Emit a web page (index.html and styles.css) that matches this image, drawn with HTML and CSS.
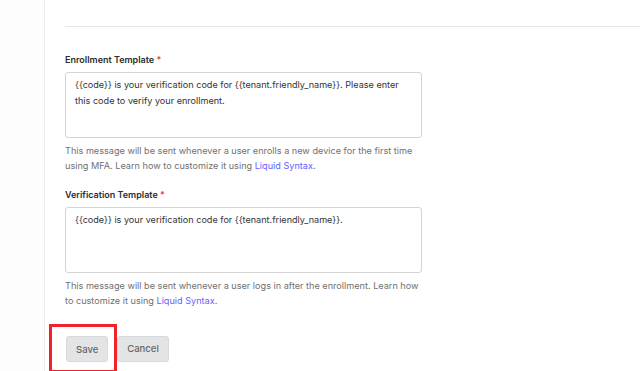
FILE: index.html
```html
<!DOCTYPE html>
<html lang="en">
<head>
    <meta charset="UTF-8">
    <meta name="viewport" content="width=device-width, initial-scale=1.0">
    <title>MFA Templates</title>
    <link rel="stylesheet" href="styles.css">
</head>
<body>
    <div class="layout">
        <div class="sidebar"></div>

        <div class="content">
            <hr class="divider">

            <form class="template-form">
                <!-- Enrollment -->
                <div class="field">
                    <label for="enrollment">Enrollment Template <span class="required">*</span></label>
                    <textarea id="enrollment" class="template-input">{{code}} is your verification code for {{tenant.friendly_name}}. Please enter this code to verify your enrollment.</textarea>
                    <p class="help">This message will be sent whenever a user enrolls a new device for the first time using MFA. Learn how to customize it using <a href="#">Liquid Syntax</a>.</p>
                </div>

                <!-- Verification -->
                <div class="field">
                    <label for="verification">Verification Template <span class="required">*</span></label>
                    <textarea id="verification" class="template-input">{{code}} is your verification code for {{tenant.friendly_name}}.</textarea>
                    <p class="help">This message will be sent whenever a user logs in after the enrollment. Learn how to customize it using <a href="#">Liquid Syntax</a>.</p>
                </div>

                <div class="actions">
                    <div class="highlight">
                        <button type="submit" class="btn">Save</button>
                    </div>
                    <button type="button" class="btn">Cancel</button>
                </div>
            </form>
        </div>
    </div>
</body>
</html>
```

FILE: styles.css
```css
body {
    margin: 0;
    background: #fff;
    font-family: 'Inter', 'Noto Sans', sans-serif;
    color: #333;
}

.layout {
    display: flex;
    min-height: 371px;
}

.sidebar {
    width: 44px;
    border-right: 1px solid #ececec;
    background: #fdfdfd;
}

.content {
    flex: 1;
    padding-left: 20px;
    padding-top: 26px;
}

.divider {
    margin: 0;
    border: none;
    border-top: 1px solid #e6e6e6;
}

.template-form {
    width: 357px;
    padding-top: 27px;
}

.field {
    margin-bottom: 16px;
}

.field:last-of-type {
    margin-bottom: 0;
}

label {
    display: block;
    font-size: 9px;
    font-weight: 600;
    color: #2d2d2d;
    line-height: 12px;
    margin-bottom: 6px;
}

.required {
    color: #e8404a;
}

.template-input {
    display: block;
    box-sizing: border-box;
    width: 357px;
    height: 66px;
    padding: 4px 12px 4px 9px;
    border: 1px solid #d4d4d4;
    border-radius: 3px;
    font-family: inherit;
    font-size: 9.1px;
    line-height: 16px;
    color: #333;
    resize: none;
}

.help {
    margin: 5px 0 0;
    font-size: 9.15px;
    line-height: 15px;
    color: #6f6f6f;
}

.help a {
    color: #635dff;
    text-decoration: none;
}

.actions {
    display: flex;
    align-items: center;
    gap: 0;
    margin-top: 3px;
}

.highlight {
    border: 3px solid #f0232a;
    padding: 9px 6px 8px 14px;
    margin-left: -16px;
}

.btn {
    display: block;
    height: 26px;
    padding: 0 9px;
    background: #e3e4e6;
    border: 1px solid #d8d9db;
    border-radius: 3px;
    font-family: inherit;
    font-size: 9.5px;
    font-weight: 500;
    color: #666;
    cursor: pointer;
}
```
